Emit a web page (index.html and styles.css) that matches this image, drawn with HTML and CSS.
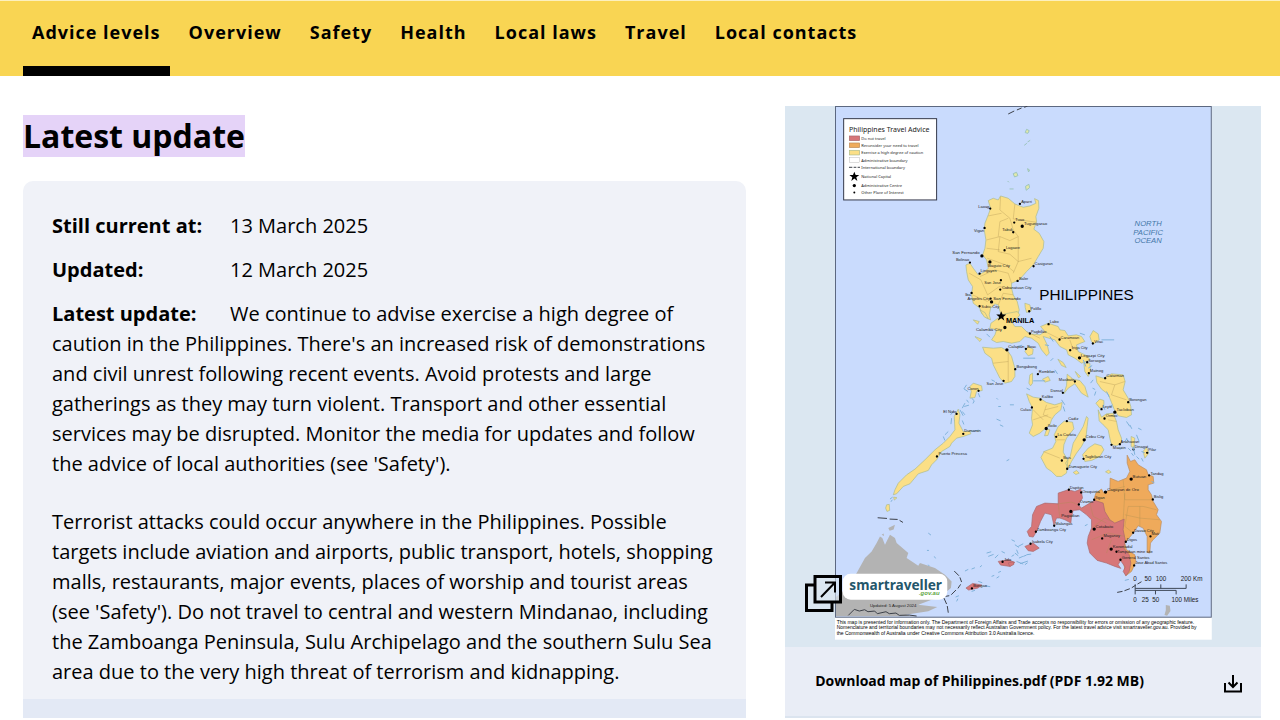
FILE: index.html
```html
<!DOCTYPE html>
<html lang="en">
<head>
    <meta charset="UTF-8">
    <meta name="viewport" content="width=device-width, initial-scale=1.0">
    <title>Philippines Travel Advice</title>
    <link rel="stylesheet" href="styles.css">
</head>
<body>

    <nav class="page-nav">
        <a class="active" href="#advice-levels">Advice levels</a>
        <a href="#overview">Overview</a>
        <a href="#safety">Safety</a>
        <a href="#health">Health</a>
        <a href="#local-laws">Local laws</a>
        <a href="#travel">Travel</a>
        <a href="#local-contacts">Local contacts</a>
    </nav>

    <main class="content">
        <section class="updates">
            <h1><mark>Latest update</mark></h1>
            <div class="update-card">
                <p><strong>Still current at:</strong>13 March 2025</p>
                <p><strong>Updated:</strong>12 March 2025</p>
                <p class="summary"><strong>Latest update:</strong>We continue to advise exercise a high degree of caution in the Philippines. There's an increased risk of demonstrations and civil unrest following recent events. Avoid protests and large gatherings as they may turn violent. Transport and other essential services may be disrupted. Monitor the media for updates and follow the advice of local authorities (see 'Safety').</p>
                <p>Terrorist attacks could occur anywhere in the Philippines. Possible targets include aviation and airports, public transport, hotels, shopping malls, restaurants, major events, places of worship and tourist areas (see 'Safety'). Do not travel to central and western Mindanao, including the Zamboanga Peninsula, Sulu Archipelago and the southern Sulu Sea area due to the very high threat of terrorism and kidnapping.</p>
            </div>
            <div class="card-footer"></div>
        </section>

        <aside class="map-card">
            <div class="map-area">
                <svg class="map" viewBox="0 0 1131 1602" role="img" aria-label="Philippines travel advice map">
                    <rect class="sheet" width="1131" height="1602"/>
                    <rect class="sea" x="1.5" y="1.5" width="1128" height="1533"/>
                    <path class="border-line" d="M520 24l18-9m8-3l14-6m8-2l10-4"/>

                    <!-- northern islands -->
                    <path class="islet" d="M575 70l8 4-4 8-8-2zM568 118l8-6m2-4l8-5M578 188l6 4-3 6zM535 203l10-4 4 10-10 4zM518 225l4 4M524 249h12M572 241l10-6 2 10-10 8z"/>

                    <!-- Luzon -->
                    <g transform="translate(285 222)">
                        <path class="land" d="M175 62L190 55 205 60 212 48 235 55 255 72 280 82 300 78 318 70 314 56 326 62 327 85 318 110 320 125 312 148 328 160 342 185 340 205 325 230 310 255 290 275 268 300 245 310 245 325 250 345 262 365 268 390 262 410 235 410 222 405 212 400 205 375 195 372 182 385 178 405 182 420 170 415 155 400 150 385 130 370 125 345 128 320 115 300 110 275 108 255 120 250 130 265 145 285 165 275 175 265 170 240 158 225 165 205 168 180 163 150 165 130 175 105 182 85z"/>
                        <path class="land" d="M285 370l15 5 4 18-14 5-4-15z"/>
                        <path class="region" d="M212 50l-2 40 30 25 10 35 15 20M175 108l40-8M255 72l-5 45 70 10M170 180l40-10 30 12 25-12v75l40-10M210 170l-5 45 35 8 25 22M170 205l40 5M172 235l55 20 25 20M150 290l45-20 40 10 10 30M118 280l35 20 20 45M173 345l35-25 37 5M205 375l15-35 30 5M128 345l45 20M235 115l-25 10-5 45M265 245l-15 35"/>
                        <g class="places">
                            <path class="dots" d="M181 86h0M270 72h0M253 128h0M164 144h0M250 157h0M224 211h0M120 248h0M149 281h0M311 259h0M263 303h0M213 301h0M211 329h0M125 339h0M182 356h0M149 379h0M298 394h0"/>
                            <path class="dots big" d="M277 139h0M156 228h0M180 246h0M185 366h0"/>
                            <text x="145" y="83">Laoag</text><text x="274" y="69">Aparri</text><text x="256" y="123">Tuao</text><text class="large" x="282" y="135">Tuguegarao</text>
                            <text x="132" y="156">Vigan</text><text x="217" y="153">Tabuk</text><text x="228" y="208">Lagawe</text><text class="large" x="67" y="222">San Fernando</text>
                            <text x="78" y="244">Bolinao</text><text class="large" x="174" y="262">Baguio City</text><text x="152" y="277">Lingayen</text><text x="314" y="255">Casiguran</text>
                            <text x="267" y="300">Baler</text><text x="163" y="313">San Jose</text><text x="216" y="327">Cabanatuan City</text><text x="106" y="348">Iba</text>
                            <text x="113" y="361">Angeles City</text><text class="large" x="190" y="361">San Fernando</text><text x="154" y="384">Subic City</text><text x="302" y="391">Polillo</text>
                        </g>
                        <text class="country" x="328" y="360">PHILIPPINES</text>
                        <g class="ocean">
                            <text x="655" y="138">NORTH</text><text x="655" y="164">PACIFIC</text><text x="655" y="190">OCEAN</text>
                        </g>
                    </g>

                    <!-- southern Luzon and the Visayas -->
                    <g transform="translate(285 612)">
                        <path class="land" d="M225 12L262 5 270 15 262 25 245 35 255 50 275 50 290 65 300 72 330 75 345 65 332 50 355 40 385 50 390 60 405 62 415 78 440 75 455 80 465 95 440 105 445 125 475 140 480 150 455 160 435 145 415 135 410 120 390 110 375 90 340 80 352 105 358 130 350 138 335 120 325 100 305 85 285 80 270 95 245 100 220 95 200 98 185 90 195 75 200 60 180 55 183 40 200 28z"/>
                        <path class="land" d="M158 112l32 3 25-2 20 12 10 15 10 35v25l-10 15-20 5-15-15-10-20-10-20-5-20-20-15zM285 125l10-15 15 8-2 15-13 5zM480 80l10-18 15 10 3 18-16 12-7-7zM462 160l18 0 2 25-7 15-10-15zM384 148l16 10 9 15-14-6zM436 185l16 15-6 4zM412 193l18 15 20 4 15 18 10 32-20-12-20-28-20 13-13 17 8-25zM300 195l8-5v30l-6 8-5-8zM338 208l17-8 6 12-16 5zM130 30l18 5-5 8zM150 0l15 8 10 18-12-5zM135 80l20 8-5 7z"/>
                        <path class="land" d="M120 230l10-10 25 8 2 14-17 3-5 18-15 2 4-20zM290 252l20 10 20 3 20 13 25 7 22-7-4 22-18 15-10 15-5 15-15 12-15 13-20 10-12-10 10-25-3-20 3-30-10-20zM350 358l10 2-6 17-10 1zM385 350l18-16 25 3 4 20-22 28-8 20-2 22 14 25-4 38-15 10-15 0-15-15-15-10-17-32 10-18 25-10 10-20-5-20zM470 320l5 5-3 25-4 35-13 25-15 20-15 25-10 20-8-15 14-20 9-40 15-25 15-25z"/>
                        <path class="land" d="M458 435l17-20 20-13 20 6 7 12-12 20-25 12-20 3zM505 300l10 22 15-10 20-2 10 25 5 25 10 25v15l-15 8-15-3-5-20-5-25-15-15-12-12zM498 280l12-12 12 4v18l-12 5zM498 198l22 7 25-13 35 3 6 20-6 25 15 25 8 25 2 25-15 8-25-5-12-20-8-20-10-25-20-15-14-20zM604 380l11 5-3 30-8-5zM640 425l10-13 7 18-12 15zM430 488l10-6 8 8-10 4zM527 486l9-5 8 6-8 4z"/>
                        <path class="region" d="M235 125v90M190 160l45-5M350 285l-10 30 25 10M310 330l45-15M335 60l50 25M290 65l40 20M510 215l45 10 30-10M555 225l-10 30 45 15M535 330l25 5M380 390l25 0M340 425l50 20M420 90l10 30M345 300l40-10M310 300l30 30"/>
                        <path class="reef" d="M110 225l-8 12 12 8M125 265l8 8-4 8M145 250l5 12M185 210l10 5M200 265l4 4M205 290h8M240 285h12M200 328l12 5M210 345l10 5M370 145l-8 8M375 180l8 12M460 150l8 20M490 210l-8 10M488 235l8 4M498 245l-4 12M540 290l8-5M590 335l10 15M600 345l6 12M625 355l10 5M570 420l8-8M585 395l6-8M590 385l4 10M620 375l8 20M395 270l10 15M400 290l5 15M300 240l-10-5M180 82l-10-10M262 110l15-4M360 80l10 15M450 70l15 5M520 285l5 15M530 245l8 16M345 105l12 2M475 175l12-8M105 280l-8 15M90 300l10 18M80 310l-6 24M280 145h36M515 90h38M310 213h36"/>
                        <g class="places">
                            <path class="dots" d="M300 71h0M356 43h0M389 89h0M489 101h0M421 121h0M472 157h0M477 190h0M288 117h0M256 178h0M324 193h0M221 213h0M435 215h0M399 249h0M526 205h0M595 277h0M515 298h0M524 326h0M332 269h0M306 293h0M411 334h0M379 381h0M146 243h0M545 405h0M570 403h0M611 419h0M652 429h0M461 447h0M396 452h0M412 477h0"/>
                            <path class="dots big" d="M225 53h0M231 120h0M449 144h0M555 307h0M349 356h0M463 390h0"/>
                            <text class="large" x="138" y="62">Calamba City</text><text x="360" y="39">Labo</text><text x="303" y="68">Pagbilao</text><text x="392" y="86">Caramoan</text><text x="493" y="99">Virac</text><text x="426" y="118">Iriga City</text>
                            <text class="large" x="235" y="115">Calapan</text><text x="292" y="113">Boac</text><text class="large" x="453" y="140">Legazpi City</text><text x="475" y="155">Sorsogon</text><text x="480" y="187">Matnog</text>
                            <text x="260" y="175">Bongabong</text><text x="327" y="190">Romblon</text><text x="170" y="225">San Jose</text><text x="387" y="212">Masbate</text><text x="362" y="246">Donsol</text><text x="530" y="202">Catarman</text>
                            <text x="598" y="274">Borongan</text><text x="518" y="294">Leyte</text><text class="large" x="560" y="303">Tacloban</text><text x="528" y="323">Ormoc</text><text x="336" y="266">Kalibo</text><text x="271" y="305">Culasi</text>
                            <text x="415" y="331">Cadiz</text><text class="large" x="354" y="353">Iloilo</text><text x="383" y="378">La Carlota</text><text class="large" x="467" y="386">Cebu City</text><text x="113" y="240">Coron</text>
                            <text x="549" y="417">Maasin</text><text x="572" y="400">Anahawan</text><text x="614" y="416">Dinagat</text><text x="655" y="425">Pilar</text><text x="465" y="444">Tagbilaran City</text><text x="400" y="449">Bais</text><text x="416" y="474">Dumaguete City</text>
                        </g>
                        <path d="M214 4l4 10h11l-9 7 3 11-9-7-10 7 4-11-9-7h11z"/>
                        <text class="capital" x="228" y="39">MANILA</text>
                    </g>

                    <!-- Palawan -->
                    <g transform="translate(0 822)">
                        <path class="land" d="M370 88l5 17-3 25 13 25 20 0 3 7-23 8-20 5-15 15-5 10-25 15-15 25-15 15-10 17-30 10-25 30-20 8-20 22-10 3 5-15 10-20 25-25 25-17 30-28 30-30 25-20 20-20 15-20-2-40zM155 375l8-1 1 18-8 3-4-10zM176 352l10 2-8 7z"/>
                        <path class="reef" d="M355 95l-8 10M350 115l-2 18M382 95l8 10M388 80l14-4M340 155l-10 10M325 170l5 12M382 122l5 12M165 358l8-6M168 366l4-6M515 243l8-4M395 60l6 8M410 155l22-4"/>
                        <g class="places">
                            <path class="dots" d="M365 102h0M385 162h0M306 230h0"/>
                            <text x="325" y="99">El Nido</text><text x="388" y="158">Dumaran</text><text x="311" y="226">Puerto Princesa</text>
                        </g>
                    </g>

                    <!-- Borneo and the Sulu islands -->
                    <g transform="translate(-150 1212)">
                        <path class="foreign" d="M275 100L285 80 292 85 300 105 315 75 330 85 335 100 370 130 365 145 400 168 405 160 450 175 480 195 500 215 498 235 480 250 465 265 440 270 400 285 457 292 430 305 362 315 395 320 153 320 153 262 190 230 215 190 240 145 260 125zM310 55l20-10-4 14-12 4zM290 75l6-4 1 8z"/>
                        <path class="border-line" d="M278 24l28 2m8 2l24 1m6 3l10 6M190 317l18-18 15 5 16-4 10 6 20-2 8 8 26-6 10 6 20-2 10 7 30-1 22 3M508 184l14 14m3 5l5 14m-3 7l-8 12m-6 5l-14 14m-6 3l-12 2m-4 5l8 18m2 6l3 20"/>
                        <path class="danger" d="M640 155l30-5 20 8-15 12-28-4zM543 235l20-14 28 5-12 9-28 6z"/>
                        <path class="reef" d="M430 70l8 6M426 122h6M448 140l4 6M430 165l3 4M540 184l10-5M560 178l10-4M585 172l6-5M605 130l14-4M610 140l16-6M630 145l10-10M650 125l10 5M680 140l8-5M690 130l10 8M700 110l15-8M702 145l12-5M640 188l8-3M620 200l8-3M580 215l12 4M600 228l16 3M512 262l10-4M515 275l4-8M635 205l8-5M560 245l10-3"/>
                        <g class="places">
                            <path class="dots" d="M653 156h0M561 236h0"/>
                            <text x="657" y="153">Jolo</text><text x="565" y="233">Bongao</text>
                            <text x="255" y="292" class="large">Updated: 5 August 2024</text>
                        </g>
                        <rect class="logo-bg" x="173" y="192" width="314" height="78" rx="24"/>
                        <text class="logo" x="193" y="240">smartraveller</text>
                        <text class="logo-domain" x="402" y="256">.gov.au</text>
                        <g class="notice">
                            <text x="155" y="342">This map is presented for information only. The Department of Foreign Affairs and Trade accepts no responsibility for errors or omission of any geographic feature.</text>
                            <text x="155" y="359">Nomenclature and territorial boundaries may not necessarily reflect Australian Government policy. For the latest travel advice visit smartraveller.gov.au. Provided by</text>
                            <text x="155" y="376">the Commonwealth of Australia under Creative Commons Attribution 3.0 Australia licence.</text>
                        </g>
                    </g>

                    <!-- Mindanao -->
                    <g transform="translate(525 1002)">
                        <path class="caution" d="M352 46L362 65 375 60 385 75 410 90 415 105 430 110 432 130 415 135 415 150 425 165 430 185 445 210 440 225 455 245 450 280 430 300 422 310 420 340 412 338 412 290 400 265 385 258 370 280 345 310 350 330 375 345 378 365 372 380 365 395 348 408 335 330 280 215 252 180 258 160 275 148 282 160 300 150 301 115 325 125 350 115 360 95 352 70z"/>
                        <path class="danger" d="M145 160L175 150 195 155 213 148 218 175 205 195 215 205 240 190 255 182 280 190 285 215 300 240 315 250 343 238 340 270 346 300 342 325 358 345 363 370 358 395 348 408 340 395 346 382 332 362 325 375 333 386 315 380 290 370 262 362 240 340 232 310 235 290 245 265 245 240 230 225 210 210 190 212 185 230 183 250 165 240 150 235 140 235 132 255 125 225 105 220 92 245 80 275 70 292 58 290 52 275 65 260 68 225 80 200 105 190 145 192zM45 320l25-10 18 15-18 10-15-2zM-5 370l15-4 2 8-12 6z"/>
                        <path class="region" d="M145 192l40-5 20 8M245 265l40-30 20 10M245 300l50-20 50 10M290 340l15-40M340 120l5 60 85 0M345 160l-5 80M355 200l45 0 40 10M355 200l-10 60 25 20M390 200l0 60M390 235l60 5M240 190l10 40 40 20M145 192l5 42M305 150l40-10M345 225l45 10"/>
                        <path class="reef" d="M355 25l8 8M370 20l5 25M380 50l8 8M395 55l5 10M365 40l6 8M425 125l8 4M345 422l12-3M5 300l10 5M15 315l12 8M40 350l10-4M20 330l5 12M50 345l14-2M20 365l20 8M30 372l24-8M45 375l8-6M225 258l8-4M395 35l10 4"/>
                        <g class="places">
                            <path class="dots" d="M177 150h0M214 158h0M207 194h0M253 180h0M133 258h0M78 276h0M62 312h0M418 107h0M429 179h0M277 296h0M320 336h0M332 360h0M373 377h0M370 279h0M348 306h0M422 290h0"/>
                            <path class="dots big" d="M364 118h0M287 157h0M183 215h0M253 268h0M304 328h0"/>
                            <text x="180" y="147">Dapitan</text><text x="217" y="161">Oroquieta</text><text x="210" y="191">Ozamis</text><text x="256" y="177">Iligan</text><text class="large" x="368" y="114">Butuan</text><text x="422" y="105">Tandag</text>
                            <text class="large" x="292" y="153">Cagayan de Oro</text><text x="432" y="176">Bislig</text><text class="large" x="154" y="231">Pagadian</text><text x="136" y="255">Malangas</text><text x="81" y="273">Zamboanga City</text><text x="66" y="309">Isabela City</text>
                            <text class="large" x="257" y="264">Cotabato</text><text x="281" y="293">Maganoy</text><text class="large" x="309" y="325">Koronadal</text><text x="322" y="340">Tampakan mine site</text><text x="336" y="357">General Santos</text><text x="376" y="374">Jose Abad Santos</text>
                            <text x="373" y="276">Davao City</text><text x="351" y="303">Digos</text><text x="425" y="287">Mati</text>
                        </g>
                    </g>

                    <!-- distance scale -->
                    <g transform="translate(525 1362)">
                        <path class="border-line" d="M322 98l16-3m6-2l16-6m6-3l12-8m5-3l12-7"/>
                        <path class="scale-line" d="M376 104V74M376 86h153V74M453 86V74M376 92h123v12M437 92v12"/>
                        <path class="foreign" d="M468 136l12 2 2 16-10 14-8-2 4-14z"/>
                        <g class="scale-text">
                            <text x="370" y="63">0</text><text x="404" y="63">50</text><text x="438" y="63">100</text><text x="513" y="63">200 Km</text>
                            <text x="370" y="127">0</text><text x="396" y="127">25</text><text x="427" y="127">50</text><text x="485" y="127">100 Miles</text>
                        </g>
                    </g>

                    <!-- legend -->
                    <g class="legend" transform="translate(0 -18)">
                        <rect class="legend-box" x="26" y="56" width="279" height="244"/>
                        <text class="legend-title" x="42" y="95">Philippines Travel Advice</text>
                        <rect class="danger" x="43" y="108" width="31" height="14"/>
                        <rect class="caution" x="43" y="129" width="31" height="14"/>
                        <rect class="land" x="43" y="151" width="31" height="14"/>
                        <rect class="blank" x="43" y="173" width="31" height="14"/>
                        <path class="border-line" d="M42 202h10m4 0h8m4 0h7"/>
                        <path d="M58 215l4 10h11l-9 7 3 11-9-7-9 7 3-11-9-7h11z"/>
                        <circle cx="58" cy="257" r="5"/>
                        <circle cx="58" cy="278" r="3"/>
                        <text x="79" y="120">Do not travel</text>
                        <text x="79" y="141">Reconsider your need to travel</text>
                        <text x="79" y="163">Exercise a high degree of caution</text>
                        <text x="79" y="185">Administrative boundary</text>
                        <text x="79" y="206">International boundary</text>
                        <text x="79" y="233">National Capital</text>
                        <text x="79" y="261">Administrative Centre</text>
                        <text x="79" y="282">Other Place of Interest</text>
                    </g>
                </svg>
                <button class="expand" type="button" aria-label="Open larger map">
                    <svg viewBox="0 0 37 37">
                        <path class="pane" d="M10 10H1.500V35.500H27V27"/>
                        <rect class="pane front" x="10" y="1.500" width="25.500" height="25.500"/>
                        <path class="arrow" d="M16 22L29.500 8M20 7.500h10v10"/>
                    </svg>
                </button>
            </div>
            <a class="download" href="#download">
                <span>Download map of Philippines.pdf (PDF 1.92 MB)</span>
                <svg viewBox="0 0 18 18">
                    <path d="M1 8v8.500h16V8M9 0v12M4.500 7.500L9 12l4.500-4.500"/>
                </svg>
            </a>
        </aside>
    </main>

</body>
</html>
```

FILE: styles.css
```css
* {
    box-sizing: border-box;
}
body {
    font-family: "Open Sans", "Noto Sans", sans-serif;
    background-color: #fff;
    color: #000;
    margin: 0;
}
.page-nav {
    display: flex;
    gap: 10px;
    height: 76px;
    padding: 0 23px;
    background-color: #f9d553;
    border-top: 1px solid #fdf0bd;
}
.page-nav a {
    padding: 18px 9px 0;
    font-size: 18px;
    line-height: 26px;
    font-weight: bold;
    letter-spacing: 1px;
    color: #000;
    text-decoration: none;
}
.page-nav a.active {
    border-bottom: 10px solid #000;
}
.content {
    display: grid;
    grid-template-columns: 1.52fr 1fr;
    gap: 39px;
    padding: 30px 19px 2px 23px;
}
.updates {
    display: flex;
    flex-direction: column;
}
h1 {
    margin: 9px 0 24px;
    font-size: 32px;
    line-height: 42px;
}
mark {
    display: inline-block;
    background-color: #e5d3f8;
    color: #000;
}
.update-card {
    flex: 1;
    padding: 30px 29px 12px;
    background-color: #f0f2f8;
    border-radius: 10px 10px 0 0;
}
.update-card p {
    margin: 0 0 14px;
    font-size: 20px;
    line-height: 30px;
}
.update-card .summary {
    margin-bottom: 28px;
}
.update-card p:last-child {
    margin-bottom: 0;
}
.update-card strong {
    display: inline-block;
    width: 178px;
}
.card-footer {
    height: 19px;
    background-color: #e3e9f5;
}
.map-card {
    display: flex;
    flex-direction: column;
    background-color: #e9edf6;
}
.map-area {
    position: relative;
    padding: 0 49px 7px 50px;
    background-color: #dbe7f1;
}
.map {
    display: block;
    width: 100%;
}
.expand {
    position: absolute;
    left: 20px;
    bottom: 35px;
    width: 37px;
    height: 37px;
    padding: 0;
    border: none;
    background: none;
    cursor: pointer;
}
.expand svg {
    display: block;
}
.pane, .arrow {
    fill: none;
    stroke: #000;
    stroke-width: 3;
}
.pane.front {
    fill: rgba(219, 231, 241, 0.6);
}
.arrow {
    stroke-width: 2;
}
.download {
    display: flex;
    flex: 1;
    align-items: center;
    justify-content: space-between;
    padding: 0 19px 0 30px;
    border-bottom: 2px solid #dbe4ef;
    font-size: 14px;
    line-height: 20px;
    font-weight: bold;
    color: #000;
    text-decoration: none;
}
.download svg {
    width: 18px;
    height: 18px;
    margin-top: 6px;
    fill: none;
    stroke: #000;
    stroke-width: 2;
}

/* map drawing */
.map text {
    font-family: "Liberation Sans", Arial, sans-serif;
}
.sheet {
    fill: #fff;
}
.sea {
    fill: #c9dbfd;
    stroke: #5c6880;
    stroke-width: 3;
}
.land {
    fill: #fbdf86;
    stroke: #a9b98c;
    stroke-width: 2;
}
.caution {
    fill: #efaa5b;
    stroke: #b98b5c;
    stroke-width: 2;
}
.danger {
    fill: #d77678;
    stroke: #a8686c;
    stroke-width: 2;
}
.foreign {
    fill: #b3b3b3;
}
.region {
    fill: none;
    stroke: #a98f4e;
    stroke-width: 1;
}
.islet {
    fill: #e4e9a8;
    stroke: #9cc4bd;
    stroke-width: 3;
}
.reef {
    fill: none;
    stroke: #7fb2da;
    stroke-width: 3;
}
.border-line {
    fill: none;
    stroke: #3c4048;
    stroke-width: 3;
}
.dots {
    fill: none;
    stroke: #000;
    stroke-width: 7;
    stroke-linecap: round;
}
.dots.big {
    stroke-width: 10;
}
.places text {
    font-size: 12px;
    fill: #222;
}
.places .large {
    font-size: 13px;
}
.map .capital {
    font-size: 22px;
    font-weight: bold;
}
.map .country {
    font-size: 46px;
}
.ocean text {
    font-size: 23px;
    font-style: italic;
    fill: #4377a8;
    text-anchor: middle;
}
.logo-bg {
    fill: #fff;
}
.map .logo {
    font-family: "Noto Sans", sans-serif;
    font-size: 41px;
    font-weight: bold;
    fill: #24566b;
}
.map .logo-domain {
    font-size: 18px;
    font-style: italic;
    font-weight: bold;
    fill: #62a744;
}
.notice text {
    font-size: 15px;
}
.scale-line {
    fill: none;
    stroke: #3d4656;
    stroke-width: 3;
}
.scale-text text {
    font-size: 19px;
    fill: #222;
}
.legend-box {
    fill: #fff;
    stroke: #34394a;
    stroke-width: 3;
}
.legend text {
    font-family: "Noto Sans", sans-serif;
    font-size: 12px;
    fill: #222;
}
.map .legend-title {
    font-size: 21px;
}
.legend .blank {
    fill: #fff;
    stroke: #999;
    stroke-width: 1;
}
```
